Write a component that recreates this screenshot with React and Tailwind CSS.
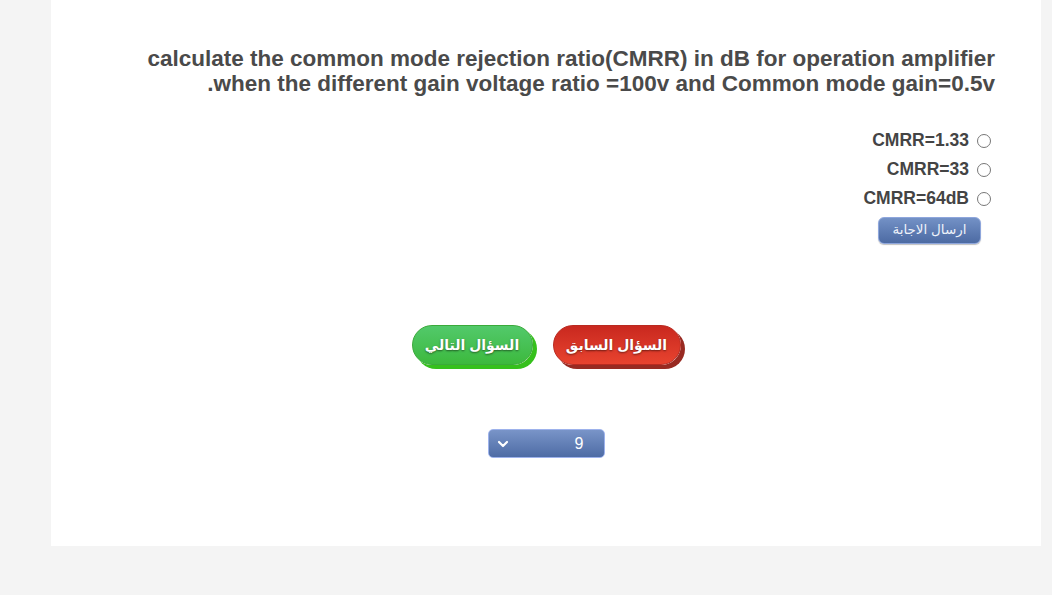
import React from "react";

function Option({ label }) {
  return (
    <label className="flex items-center justify-end h-[29px] text-[17.5px] font-bold text-[#444]">
      <span>{label}</span>
      <span className="ml-[8px] w-[14px] h-[14px] rounded-full border border-[#777] bg-white"></span>
    </label>
  );
}

export default function App() {
  return (
    <div
      className="min-h-screen w-full bg-[#f4f4f4] pl-[51px]"
      style={{ fontFamily: '"Liberation Sans", "DejaVu Sans", Arial, sans-serif' }}
    >
      <div className="w-[990px] h-[546px] bg-white flex flex-col">
        <h1 className="pt-[46px] pr-[46px] text-right text-[22.5px] leading-[25px] font-bold text-[#4a4a4a]">
          calculate the common mode rejection ratio(CMRR) in dB for operation amplifier
          <br />
          .when the different gain voltage ratio =100v and Common mode gain=0.5v
        </h1>

        <div className="mt-[30px] pr-[50px] flex flex-col">
          <Option label="CMRR=1.33" />
          <Option label="CMRR=33" />
          <Option label="CMRR=64dB" />
          <div className="flex justify-end mt-[4px] pr-[10px]">
            <button className="w-[103px] h-[27px] rounded-[6px] border border-[#8ea6dc] bg-gradient-to-b from-[#7391c6] to-[#4d6ba3] text-[13.5px] text-[#eef2fa] shadow-[0_1px_1px_rgba(0,0,0,0.25)]">
              ارسال الاجابة
            </button>
          </div>
        </div>

        <div className="mt-[81px] flex justify-center gap-[16px]">
          <button className="w-[121px] h-[40px] rounded-full bg-gradient-to-b from-[#52c96a] to-[#3cb93c] border border-[#3aaa3a] text-white text-[14px] font-bold shadow-[4px_4px_0_#35c01c] [text-shadow:0_1px_2px_rgba(0,0,0,0.5)] mr-[4px]">
            السؤال التالي
          </button>
          <button className="w-[128px] h-[40px] rounded-full bg-gradient-to-b from-[#c9281f] to-[#e8432f] border border-[#b92a20] text-white text-[14px] font-bold shadow-[4px_4px_0_#982a22] [text-shadow:0_1px_2px_rgba(0,0,0,0.5)]">
            السؤال السابق
          </button>
        </div>

        <div className="mt-[64px] flex justify-center">
          <div className="w-[117px] h-[29px] rounded-[5px] border border-[#9db2ec] bg-gradient-to-b from-[#7994c8] to-[#4e6ca5] flex items-center px-[6px] text-white">
            <svg width="16" height="16" viewBox="0 0 16 16" fill="none" stroke="white" strokeWidth="2.2" strokeLinecap="round" strokeLinejoin="round">
              <path d="M4 6 L8 10 L12 6" />
            </svg>
            <span className="ml-auto mr-[14px] text-[16px]">9</span>
          </div>
        </div>
      </div>
    </div>
  );
}
